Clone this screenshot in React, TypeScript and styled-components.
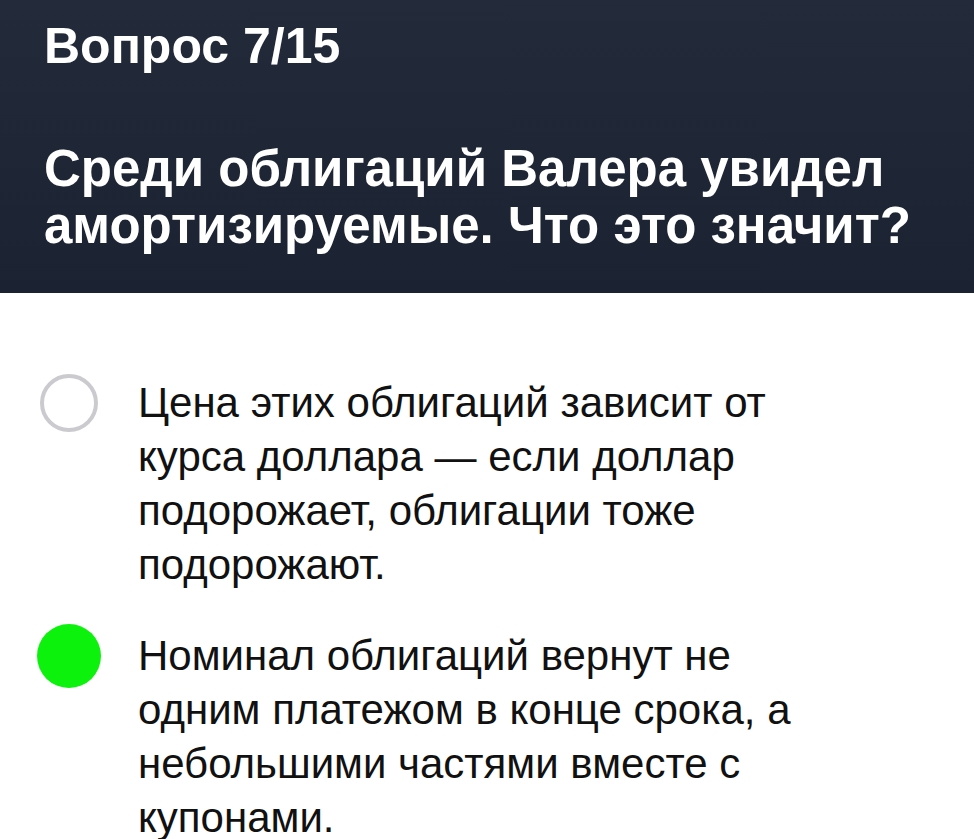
import styled, { createGlobalStyle } from "styled-components";

const GlobalStyle = createGlobalStyle`
  html, body {
    margin: 0;
    padding: 0;
    background: #ffffff;
  }
  body {
    font-family: "Liberation Sans", Arial, sans-serif;
    -webkit-font-smoothing: antialiased;
  }
`;

const Page = styled.div`
  min-height: 839px;
  background: #ffffff;
`;

const Header = styled.header`
  background: linear-gradient(180deg, #232a39 0%, #1b2232 100%);
  padding: 18px 40px 39px 44px;
  color: #ffffff;
`;

const Counter = styled.div`
  font-size: 50px;
  font-weight: 700;
  line-height: 57.5px;
`;

const Question = styled.h1`
  margin: 64px 0 0;
  font-size: 51px;
  font-weight: 700;
  line-height: 57px;
`;

const AnswerList = styled.ul`
  list-style: none;
  margin: 0;
  padding: 83px 0 0 37px;
  display: flex;
  flex-direction: column;
  gap: 37px;
`;

const AnswerRow = styled.li`
  display: flex;
  align-items: flex-start;
  gap: 37px;
  cursor: pointer;
`;

const RadioSlot = styled.div`
  width: 64px;
  height: 54px;
  flex: none;
  display: flex;
  align-items: center;
  justify-content: center;
`;

const Radio = styled.span<{ $checked?: boolean }>`
  display: block;
  box-sizing: border-box;
  border-radius: 50%;
  width: ${(p) => (p.$checked ? "64px" : "58px")};
  height: ${(p) => (p.$checked ? "64px" : "58px")};
  background: ${(p) => (p.$checked ? "#0df20d" : "transparent")};
  border: ${(p) => (p.$checked ? "none" : "4px solid #cbcbcf")};
`;

const AnswerText = styled.div`
  max-width: 710px;
  font-size: 42px;
  line-height: 54px;
  color: #111111;
`;

const answers = [
  {
    text: "Цена этих облигаций зависит от курса доллара — если доллар подорожает, облигации тоже подорожают.",
    checked: false,
  },
  {
    text: "Номинал облигаций вернут не одним платежом в конце срока, а небольшими частями вместе с купонами.",
    checked: true,
  },
];

export default function App() {
  return (
    <Page>
      <GlobalStyle />
      <Header>
        <Counter>Вопрос 7/15</Counter>
        <Question>Среди облигаций Валера увидел амортизируемые. Что это значит?</Question>
      </Header>
      <AnswerList>
        {answers.map((a) => (
          <AnswerRow key={a.text}>
            <RadioSlot>
              <Radio $checked={a.checked} />
            </RadioSlot>
            <AnswerText>{a.text}</AnswerText>
          </AnswerRow>
        ))}
      </AnswerList>
    </Page>
  );
}
